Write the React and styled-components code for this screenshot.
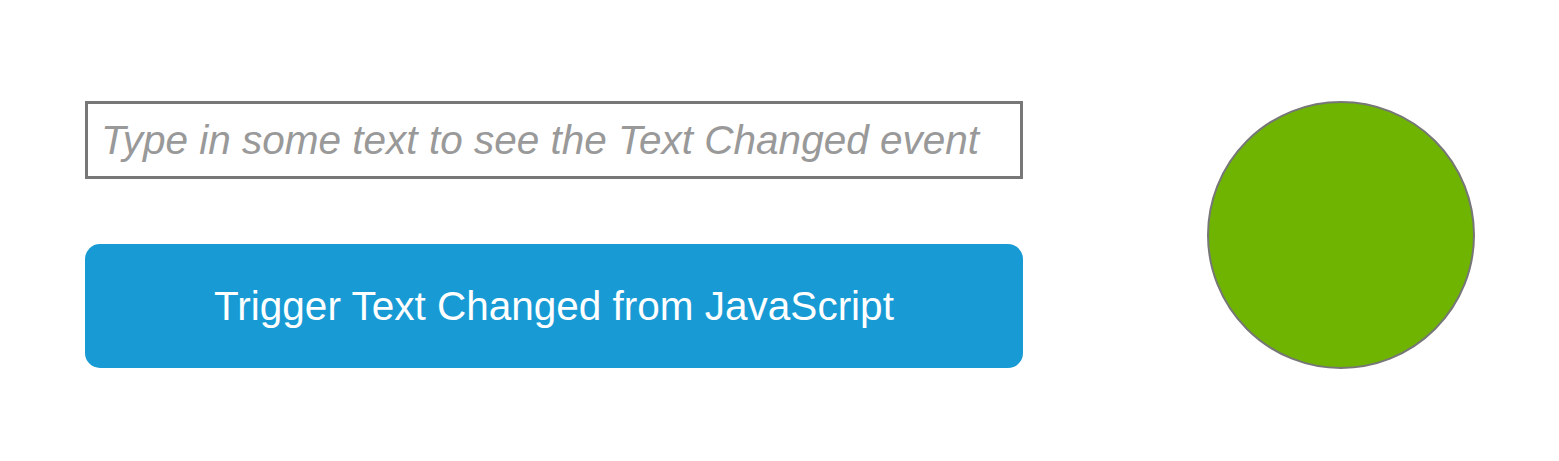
import React from "react";
import styled, { createGlobalStyle } from "styled-components";

const GlobalStyle = createGlobalStyle`
  body {
    margin: 0;
    background: #ffffff;
    font-family: "Liberation Sans", Arial, sans-serif;
  }
`;

const Page = styled.div`
  display: flex;
  flex-direction: row;
  align-items: flex-start;
  gap: 184px;
  padding: 101px 0 0 85px;
`;

const Controls = styled.div`
  display: flex;
  flex-direction: column;
  gap: 65px;
  width: 938px;
`;

const TextBox = styled.input`
  box-sizing: border-box;
  width: 100%;
  height: 78px;
  border: 3px solid #777777;
  border-radius: 0;
  padding: 0 13px;
  font-family: "Liberation Sans", Arial, sans-serif;
  font-size: 40.5px;
  color: #333333;
  outline: none;

  &::placeholder {
    color: #999999;
    font-style: italic;
  }
`;

const TriggerButton = styled.button`
  box-sizing: border-box;
  width: 100%;
  height: 124px;
  border: none;
  border-radius: 15px;
  background: #189bd5;
  color: #ffffff;
  font-family: "Liberation Sans", Arial, sans-serif;
  font-size: 40.5px;
  cursor: pointer;
`;

const Indicator = styled.div`
  box-sizing: border-box;
  width: 268px;
  height: 268px;
  border-radius: 50%;
  border: 2px solid #777777;
  background: ${(p) => p.$color};
`;

export default function App() {
  return (
    <>
      <GlobalStyle />
      <Page>
        <Controls>
          <TextBox placeholder="Type in some text to see the Text Changed event" />
          <TriggerButton>Trigger Text Changed from JavaScript</TriggerButton>
        </Controls>
        <Indicator $color="#6eb400" />
      </Page>
    </>
  );
}
